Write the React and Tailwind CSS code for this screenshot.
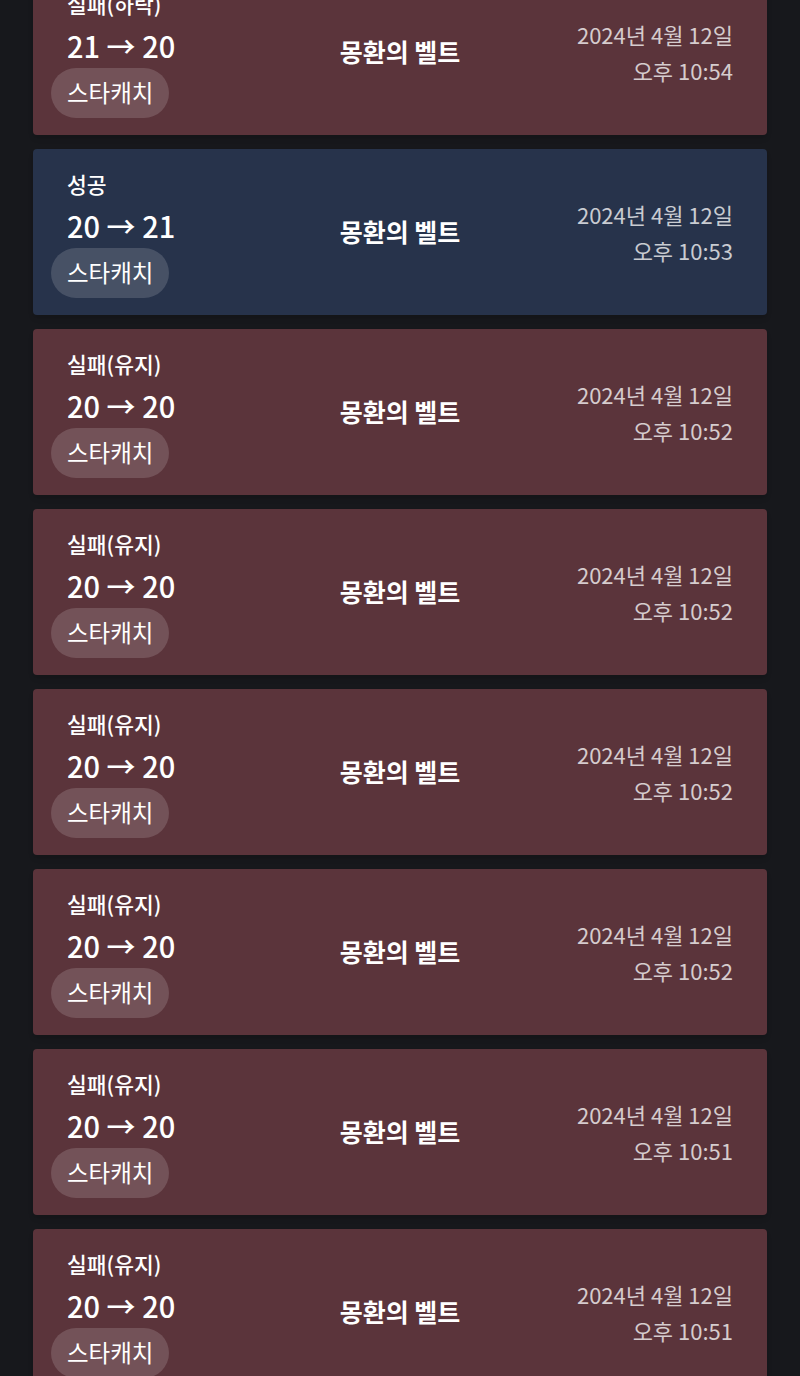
const logs = [
    { result: "실패(하락)", from: 21, to: 20, time: "오후 10:54", success: false },
    { result: "성공", from: 20, to: 21, time: "오후 10:53", success: true },
    { result: "실패(유지)", from: 20, to: 20, time: "오후 10:52", success: false },
    { result: "실패(유지)", from: 20, to: 20, time: "오후 10:52", success: false },
    { result: "실패(유지)", from: 20, to: 20, time: "오후 10:52", success: false },
    { result: "실패(유지)", from: 20, to: 20, time: "오후 10:52", success: false },
    { result: "실패(유지)", from: 20, to: 20, time: "오후 10:51", success: false },
    { result: "실패(유지)", from: 20, to: 20, time: "오후 10:51", success: false },
]

function LogCard({ log }) {
    return (
        <div className={`${log.success ? "bg-[#27334b]" : "bg-[#5b343b]"} h-[166px] rounded-[4px] shadow-md px-[34px] grid grid-cols-[1fr_auto_1fr] items-center`}>
            <div className="flex flex-col pt-[3px]">
                <p className="text-[21.5px] leading-[30px] font-medium text-white">{log.result}</p>
                <p className="text-[29px] leading-[36px] font-medium text-white mt-[8px]">{log.from} → {log.to}</p>
                <div className="mt-[5px]">
                    <span className="-ml-4 inline-flex items-center h-[50px] px-4 rounded-full bg-white/15 text-[23.5px] text-white">스타캐치</span>
                </div>
            </div>
            <p className="text-[25px] font-bold text-white text-center">몽환의 벨트</p>
            <div className="text-right text-[22px] leading-[36px] text-white/75">
                <p>2024년 4월 12일</p>
                <p>{log.time}</p>
            </div>
        </div>
    )
}

export default function App() {
    return (
        <div className="h-[1376px] overflow-hidden bg-[#17181c] px-[33px]" style={{ fontFamily: '"Noto Sans CJK KR", "Noto Sans", sans-serif' }}>
            <div className="mt-[-31px] flex flex-col gap-[14px]">
                {logs.map((log, i) => (
                    <LogCard key={i} log={log} />
                ))}
            </div>
        </div>
    )
}
